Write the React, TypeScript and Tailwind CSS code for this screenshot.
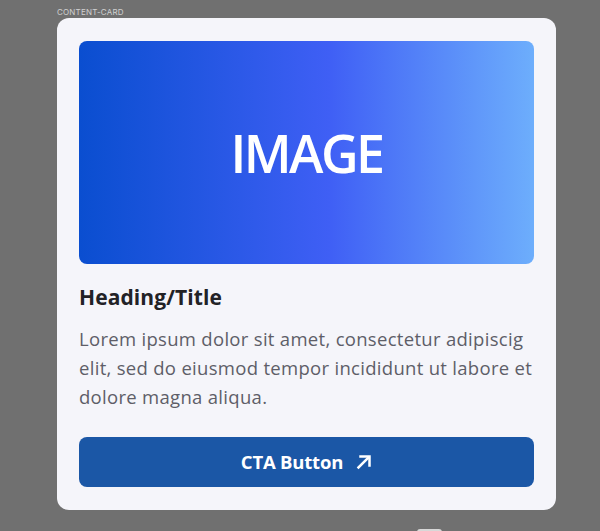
import React from "react";

export default function App() {
  return (
    <div className="w-[600px] h-[531px] bg-[#707070] overflow-hidden relative" style={{ fontFamily: '"Open Sans", "Noto Sans", sans-serif' }}>
      <div className="pl-[57px] pt-[6px]">
        <div className="text-[8px] leading-[12px] text-[#d0d0d0] tracking-[0.2px]" style={{ fontFamily: 'Inter, sans-serif' }}>CONTENT-CARD</div>
        <div className="w-[499px] h-[492px] bg-[#f5f5fa] rounded-[12px] pt-[23px] px-[22px] flex flex-col">
          <div className="h-[223px] shrink-0 rounded-[8px] flex items-center justify-center bg-[linear-gradient(90deg,#0a4ed0_0%,#3f5ff5_55%,#6daefc_100%)]">
            <span className="text-white text-[52px] font-semibold tracking-[-2.6px] leading-none">IMAGE</span>
          </div>
          <div className="mt-[20px] shrink-0 text-[21px] leading-[26px] font-bold text-[#222226] tracking-[0.1px]">Heading/Title</div>
          <div className="mt-[14px] shrink-0 whitespace-nowrap text-[18.5px] leading-[29px] text-[#5e5e68] tracking-[0.3px]">
            Lorem ipsum dolor sit amet, consectetur adipiscig<br />
            elit, sed do eiusmod tempor incididunt ut labore et<br />
            dolore magna aliqua.
          </div>
          <button className="mt-[26px] shrink-0 h-[50px] w-full rounded-[8px] bg-[#1b57a6] flex items-center justify-center gap-[13px] text-white text-[18.5px] font-bold tracking-[-0.2px]">
            <span>CTA Button</span>
            <svg width="16" height="16" viewBox="0 0 16 16" fill="none" stroke="white" strokeWidth="2.5" strokeLinecap="square">
              <path d="M2.5 13.5 L12.5 3.5" />
              <path d="M4.5 2.5 H13.5 V11.5" />
            </svg>
          </button>
        </div>
      </div>
      <div className="absolute left-[417px] top-[529px] w-[25px] h-[4px] rounded-t-[3px] bg-[#d8d8d8]" />
    </div>
  );
}
